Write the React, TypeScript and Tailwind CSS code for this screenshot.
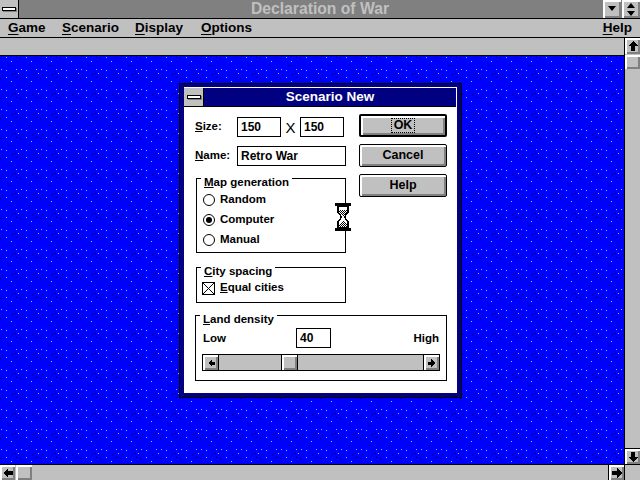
import React from 'react';

const bevel = 'shadow-[inset_1px_1px_0_#fff,inset_2px_2px_0_#fff,inset_-1px_-1px_0_#808080,inset_-2px_-2px_0_#808080]';
const font = "font-['Liberation_Sans',Arial,sans-serif] font-bold";

const arrows: Record<string, string> = {
  up: '6,1 11,6 8,6 8,11 4,11 4,6 1,6',
  down: '6,11 11,6 8,6 8,1 4,1 4,6 1,6',
  left: '1,6 6,1 6,4 11,4 11,8 6,8 6,11',
  right: '11,6 6,1 6,4 1,4 1,8 6,8 6,11',
  tiny_left: '3,6 7,2 7,4.5 10,4.5 10,7.5 7,7.5 7,10',
  tiny_right: '9,6 5,2 5,4.5 2,4.5 2,7.5 5,7.5 5,10',
};

const Arrow = ({ dir, size = 12 }: { dir: string; size?: number }) => (
  <svg width={size} height={size} viewBox="0 0 12 12" shapeRendering="crispEdges">
    <polygon points={arrows[dir]} fill="#000" />
  </svg>
);

const ScrollBtn = ({ dir, className = '' }: { dir: string; className?: string }) => (
  <div className={`flex items-center justify-center bg-[#c0c0c0] ${bevel} ${className}`}>
    <Arrow dir={dir} />
  </div>
);

const SysBar = () => (
  <div className="w-[14px] h-[4px] bg-white border border-black shadow-[1px_1px_0_#808080]" />
);

const Field = ({ value, className = '' }: { value: string; className?: string }) => (
  <div className={`h-[20px] border border-black bg-white pl-[3px] flex items-center text-[12px] text-black ${className}`}>
    {value}
  </div>
);

const Group = ({ title, className = '', children }: { title: React.ReactNode; className?: string; children: React.ReactNode }) => (
  <div className={`relative border border-black ${className}`}>
    <span className="absolute -top-[4px] left-[4px] bg-white px-[3px] text-[11.5px] leading-[14px] whitespace-nowrap">{title}</span>
    {children}
  </div>
);

const Radio = ({ label, checked = false }: { label: string; checked?: boolean }) => (
  <div className="h-[20px] flex items-center gap-[5px] text-[11.5px]">
    <div className="w-[12px] h-[12px] rounded-full border border-black bg-white flex items-center justify-center">
      {checked && <div className="w-[6px] h-[6px] rounded-full bg-black" />}
    </div>
    <span>{label}</span>
  </div>
);

const DlgButton = ({ children, main = false }: { children: React.ReactNode; main?: boolean }) => (
  <div
    className={`w-[88px] h-[23px] flex items-center justify-center bg-[#c0c0c0] border-black rounded-[2px] text-[12.5px] ${bevel} ${
      main ? 'border-2' : 'border'
    }`}
  >
    {children}
  </div>
);

// wait cursor sitting over the dialog
const Hourglass = () => (
  <svg className="absolute left-[151px] top-[96px]" width="16" height="28" viewBox="0 0 16 28" shapeRendering="crispEdges">
    <defs>
      <pattern id="sand" width="2" height="2" patternUnits="userSpaceOnUse">
        <rect width="2" height="2" fill="#fff" />
        <rect width="1" height="1" fill="#000" />
        <rect x="1" y="1" width="1" height="1" fill="#000" />
      </pattern>
    </defs>
    <polygon points="3,3 13,3 13,9 9.5,14 13,19 13,25 3,25 3,19 6.5,14 3,9" fill="#fff" stroke="#000" strokeWidth="1.5" />
    <polygon points="4,7 12,7 12,9 8,13 4,9" fill="url(#sand)" />
    <polygon points="8,17 12,21 12,24 4,24 4,21" fill="url(#sand)" />
    <rect x="0" y="0" width="16" height="3" fill="#000" />
    <rect x="0" y="25" width="16" height="3" fill="#000" />
  </svg>
);

const Terrain = () => (
  <svg className="block w-full h-full" shapeRendering="crispEdges">
    <defs>
      <pattern id="sea" width="20" height="20" patternUnits="userSpaceOnUse">
        <rect width="20" height="20" fill="#0000ff" />
        <rect x="6" y="1" width="1" height="1" fill="#00ffff" />
        <rect x="16" y="1" width="1" height="1" fill="#000" />
        <rect x="0" y="2" width="1" height="1" fill="#000" />
        <rect x="11" y="5" width="1" height="1" fill="#00ffff" />
        <rect x="9" y="9" width="1" height="1" fill="#000" />
        <rect x="1" y="13" width="1" height="1" fill="#7fbfff" />
        <rect x="16" y="13" width="1" height="1" fill="#7fbfff" />
        <rect x="6" y="14" width="1" height="1" fill="#00ffff" />
        <rect x="18" y="17" width="1" height="1" fill="#7fbfff" />
        <rect x="2" y="18" width="1" height="1" fill="#000" />
        <rect x="12" y="18" width="1" height="1" fill="#000" />
        <rect x="15" y="17" width="1" height="1" fill="#000" />
      </pattern>
    </defs>
    <rect width="100%" height="100%" fill="url(#sea)" />
  </svg>
);

export default function App() {
  return (
    <div className={`relative w-[640px] h-[480px] flex flex-col overflow-hidden text-black bg-[#c0c0c0] ${font}`}>
      {/* Title bar */}
      <div className="h-[19px] flex border-b border-black bg-[#808080] shrink-0">
        <div className="w-[19px] flex items-center justify-center bg-[#c0c0c0] border-r border-black">
          <SysBar />
        </div>
        <div className="flex-1 pl-[19px] text-center text-[15.7px] leading-[18px] text-[#c0c0c0]">Declaration of War</div>
        <div className={`w-[18px] ml-px flex items-center justify-center bg-[#c0c0c0] ${bevel}`}>
          <svg width="10" height="6" viewBox="0 0 10 6"><polygon points="1,0 9,0 5,5" fill="#000" /></svg>
        </div>
        <div className={`w-[18px] ml-px flex items-center justify-center bg-[#c0c0c0] ${bevel}`}>
          <svg width="10" height="13" viewBox="0 0 10 13"><polygon points="5,0 9,5 1,5" fill="#000" /><polygon points="1,8 9,8 5,13" fill="#000" /></svg>
        </div>
      </div>

      {/* Menu bar */}
      <div className="h-[19px] flex items-center border-b border-black shrink-0 text-[13.5px] pl-[8px] pr-[8px]">
        <span className="w-[54px]"><u className="underline-offset-2">G</u>ame</span>
        <span className="w-[73px]"><u className="underline-offset-2">S</u>cenario</span>
        <span className="w-[66px]"><u className="underline-offset-2">D</u>isplay</span>
        <span><u className="underline-offset-2">O</u>ptions</span>
        <span className="ml-auto"><u className="underline-offset-2">H</u>elp</span>
      </div>

      {/* Body */}
      <div className="flex-1 flex min-h-0">
        <div className="w-[624px] flex flex-col">
          <div className="h-[18px] border-b border-black shrink-0" />
          <div className="flex-1 min-h-0"><Terrain /></div>
          <div className="h-[16px] border-t border-black flex shrink-0">
            <ScrollBtn dir="left" className="w-[15px]" />
            <div className={`w-[16px] ml-px bg-[#c0c0c0] ${bevel}`} />
            <div className="flex-1 border-r border-black" />
            <ScrollBtn dir="right" className="w-[15px]" />
          </div>
        </div>
        <div className="w-[16px] flex flex-col border-l border-black">
          <ScrollBtn dir="up" className="h-[16px] shrink-0" />
          <div className={`h-[14px] mt-px bg-[#c0c0c0] ${bevel} shrink-0`} />
          <div className="flex-1 border-b border-black" />
          <ScrollBtn dir="down" className="h-[15px] shrink-0" />
          <div className="h-[16px] border-t border-black shrink-0" />
        </div>
      </div>

      {/* Scenario New dialog */}
      <div className="absolute left-[179px] top-[83px] w-[283px] h-[315px] border border-black">
        <div className="w-full h-full border-4 border-t-[3px] border-[#000080] bg-white">
          <div className="h-[20px] pt-px flex border-b border-black mr-px">
            <div className="w-[20px] flex items-center justify-center bg-[#c0c0c0] border-r border-black">
              <SysBar />
            </div>
            <div className="flex-1 bg-[#000080] text-white text-center text-[13.5px] leading-[18px]">Scenario New</div>
          </div>

          <div className="relative flex pl-[11px]">
            <div className="w-[164px] pt-[10px]">
              <div className="flex items-center">
                <span className="w-[42px] text-[11.5px]"><u>S</u>ize:</span>
                <Field value="150" className="w-[44px]" />
                <span className="w-[19px] text-center text-[15px] leading-none font-normal">X</span>
                <Field value="150" className="w-[44px]" />
              </div>
              <div className="flex items-center mt-[9px]">
                <span className="w-[42px] text-[11.5px]"><u>N</u>ame:</span>
                <Field value="Retro War" className="w-[109px]" />
              </div>
              <Group title={<><u>M</u>ap generation</>} className="ml-px mt-[12px] w-[150px] h-[75px] pt-[11px] pl-[6px]">
                <Radio label="Random" />
                <Radio label="Computer" checked />
                <Radio label="Manual" />
              </Group>
              <Group title={<><u>C</u>ity spacing</>} className="ml-px mt-[14px] w-[150px] h-[36px] pt-[12px] pl-[5px]">
                <div className="h-[16px] flex items-center gap-[5px] text-[11.5px]">
                  <svg width="13" height="13" viewBox="0 0 13 13" shapeRendering="crispEdges">
                    <rect x="0.5" y="0.5" width="12" height="12" fill="#fff" stroke="#000" />
                    <path d="M1 1L12 12M12 1L1 12" stroke="#000" />
                  </svg>
                  <span><u>E</u>qual cities</span>
                </div>
              </Group>
            </div>
            <div className="pt-[7px] flex flex-col gap-[7px]">
              <DlgButton main>
                <span className="border border-dotted border-black px-[2px] leading-[13px]">OK</span>
              </DlgButton>
              <DlgButton>Cancel</DlgButton>
              <DlgButton>Help</DlgButton>
            </div>
            <Hourglass />
          </div>

          <Group title={<><u>L</u>and density</>} className="ml-[11px] mt-[12px] w-[252px] h-[66px] px-[6px] pt-[12px]">
            <div className="flex items-center text-[11.5px]">
              <span className="w-[94px] pl-px pt-[2px]">Low</span>
              <Field value="40" className="w-[35px]" />
              <span className="ml-auto pr-px pt-[2px]">High</span>
            </div>
            <div className="mt-[6px] h-[17px] w-[238px] border border-black flex bg-[#c0c0c0]">
              <div className={`w-[16px] flex items-center justify-center border-r border-black ${bevel}`}>
                <Arrow dir="tiny_left" />
              </div>
              <div className="w-[62px]" />
              <div className={`w-[17px] border-x border-black ${bevel}`} />
              <div className="flex-1" />
              <div className={`w-[16px] flex items-center justify-center border-l border-black ${bevel}`}>
                <Arrow dir="tiny_right" />
              </div>
            </div>
          </Group>
        </div>
      </div>
    </div>
  );
}
